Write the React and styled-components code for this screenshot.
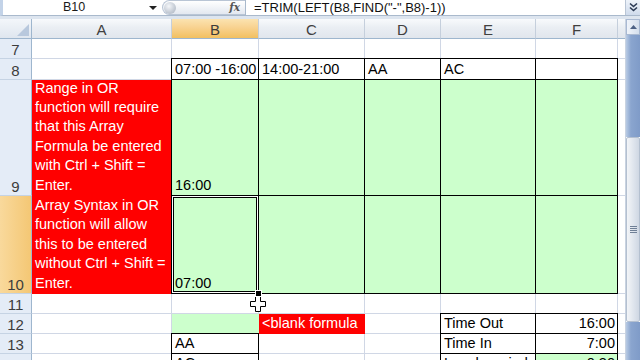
import React from 'react';
import styled, { createGlobalStyle, css } from 'styled-components';

const GlobalStyle = createGlobalStyle`
  html, body { margin: 0; padding: 0; background: #fff; overflow: hidden; }
  #root { width: 640px; height: 360px; }
`;

const FILLS = { red: '#ff0000', green: '#ccffcc' };
const GRID = '#d0d7e5';

const Window = styled.div`
  position: relative;
  width: 640px;
  height: 360px;
  overflow: hidden;
  display: flex;
  flex-direction: column;
  font-family: "Liberation Sans", Arial, sans-serif;
  background: #fff;
`;

const FormulaBar = styled.div`
  display: flex;
  align-items: stretch;
  height: 16px;
  box-sizing: border-box;
  border-bottom: 1px solid #a9b9cc;
  border-left: 3px solid #c3d3e8;
  background: #fff;
`;

const NameBox = styled.div`
  width: 142px;
  display: flex;
  align-items: center;
  justify-content: center;
  font-size: 12.5px;
  line-height: 15px;
  color: #1a1a1a;
`;

const DropArrow = styled.div`
  align-self: center;
  width: 0;
  height: 0;
  margin: 0 5px 0 4px;
  border-left: 4px solid transparent;
  border-right: 4px solid transparent;
  border-top: 4px solid #222;
`;

const FxPill = styled.div`
  width: 83px;
  box-sizing: border-box;
  display: flex;
  align-items: center;
  border: 1px solid #b9c5d5;
  border-right: none;
  border-radius: 8px 0 0 8px;
  background: linear-gradient(#ffffff, #e3e8f0);
`;

const Knob = styled.div`
  width: 12px;
  height: 12px;
  margin-left: 1px;
  border-radius: 50%;
  background: radial-gradient(circle at 40% 35%, #f4f6f9, #c3cad4 60%, #a9b2bf);
`;

const FxLabel = styled.span`
  margin-left: auto;
  padding-right: 5px;
  font-family: "DejaVu Serif", "Liberation Serif", serif;
  font-style: italic;
  font-weight: bold;
  font-size: 10.5px;
  line-height: 13px;
  color: #555;
`;

const FormulaText = styled.div`
  flex: 1;
  border-left: 1px solid #a9b9cc;
  padding-left: 8px;
  font-size: 13px;
  line-height: 15px;
  color: #111;
  white-space: nowrap;
`;

const ExpandButton = styled.div`
  width: 14px;
  display: flex;
  align-items: center;
  justify-content: center;
  border-left: 1px solid #b9c5d5;
  background: linear-gradient(#eef3fa, #cfdbec);
`;

const Strip = styled.div`
  height: 3px;
  background: #dde5ef;
`;

const Body = styled.div`
  flex: 1;
  display: flex;
  min-height: 0;
`;

const Sheet = styled.div`
  width: 626px;
  display: grid;
  grid-template-columns: 32px 140px 87px 106px 76px 95px 82px 8px;
  grid-template-rows: 20px 20px 21px 116px 98px 20px 20px 20px 20px;
  overflow: hidden;
`;

const Corner = styled.div`
  position: relative;
  box-sizing: border-box;
  background: linear-gradient(#f3f6fa, #dfe6ef);
  border-right: 1px solid #9eb6ce;
  border-bottom: 1px solid #9eb6ce;
  &::after {
    content: '';
    position: absolute;
    right: 2px;
    bottom: 2px;
    width: 0;
    height: 0;
    border-left: 12px solid transparent;
    border-bottom: 12px solid #b8c8dd;
  }
`;

const ColHeader = styled.div`
  box-sizing: border-box;
  display: flex;
  align-items: center;
  justify-content: center;
  padding-top: 1px;
  font-size: 15px;
  line-height: 19px;
  color: ${p => (p.$active ? '#3b3b3b' : '#404040')};
  border-right: 1px solid #c5cfdc;
  border-bottom: 1px solid #9eb6ce;
  background: ${p =>
    p.$active
      ? 'linear-gradient(#fbe3b0, #f8d290 45%, #f2c060)'
      : 'linear-gradient(#f8fafc, #eaeef3 45%, #e1e6ed)'};
  overflow: hidden;
`;

const RowHeader = styled.div`
  box-sizing: border-box;
  display: flex;
  align-items: flex-end;
  justify-content: center;
  font-size: 15px;
  line-height: 16px;
  color: #3c3c3c;
  border-right: 1px solid #9eb6ce;
  border-bottom: 1px solid #c5d3e4;
  background: ${p => (p.$active ? 'linear-gradient(to right, #f9d99c, #f4c774)' : '#e4ecf7')};
`;

const Cell = styled.div`
  position: relative;
  box-sizing: border-box;
  min-width: 0;
  display: flex;
  align-items: flex-end;
  justify-content: ${p => (p.$align === 'right' ? 'flex-end' : 'flex-start')};
  padding: 0 ${p => (p.$align === 'right' ? '2px' : '3px')} 0 3px;
  font-size: 14.5px;
  line-height: ${p => (p.$wrap ? '19.4px' : '19px')};
  color: ${p => (p.$fill === 'red' ? '#ffffff' : '#000000')};
  background: ${p => FILLS[p.$fill] || '#ffffff'};
  border-right: 1px solid ${p => FILLS[p.$fill] || GRID};
  border-bottom: 1px solid ${p => FILLS[p.$fill] || GRID};
  white-space: ${p => (p.$wrap ? 'pre-line' : 'nowrap')};
  overflow: hidden;
  ${p =>
    p.$box &&
    css`
      border-right-color: #000;
      border-bottom-color: #000;
      box-shadow: -1px 0 0 #000, 0 -1px 0 #000, -1px -1px 0 #000;
    `}
  ${p =>
    p.$selected &&
    css`
      overflow: visible;
      z-index: 1;
      box-shadow: -1px 0 0 #000, 0 -1px 0 #000, -1px -1px 0 #000,
        inset 0 0 0 1px #fff, inset 0 0 0 2px #000;
    `}
`;

const FillHandle = styled.div`
  position: absolute;
  right: -4px;
  bottom: -4px;
  width: 5px;
  height: 5px;
  background: #000;
  border: 1px solid #fff;
`;

const ScrollBar = styled.div`
  width: 14px;
  display: flex;
  flex-direction: column;
  border-left: 1px solid #c9d3e1;
`;

const ScrollUp = styled.div`
  height: 16px;
  box-sizing: border-box;
  display: flex;
  align-items: center;
  justify-content: center;
  border: 1px solid #a9b9d2;
  background: linear-gradient(to right, #f0f4fa, #d4deec);
`;

const Track = styled.div`
  height: ${p => (p.$h ? `${p.$h}px` : 'auto')};
  flex: ${p => (p.$h ? 'none' : '1')};
  background: linear-gradient(to right, #b9cbe4, #8aa5cf 35%, #7f9bc8);
`;

const Thumb = styled.div`
  height: 185px;
  box-sizing: border-box;
  display: flex;
  align-items: center;
  justify-content: center;
  border: 1px solid #b4c0d0;
  border-radius: 2px;
  background: linear-gradient(to right, #f3f5f8, #dde3ec 60%, #cfd7e3);
`;

const Grip = styled.div`
  width: 7px;
  height: 7px;
  background: repeating-linear-gradient(#6f7f96 0 1px, transparent 1px 2px);
`;

const Cursor = styled.svg`
  position: absolute;
  left: 250px;
  top: 296px;
`;

const COLS = ['A', 'B', 'C', 'D', 'E', 'F', 'G'];

const TEXT9 = 'Range in OR\nfunction will require\nthat this Array\nFormula be entered\nwith Ctrl + Shift =\nEnter.';
const TEXT10 = 'Array Syntax in OR\nfunction will allow\nthis to be entered\nwithout Ctrl + Shift =\nEnter.';

const g = { fill: 'green', box: true };

const ROWS = [
  { n: 7, cells: {} },
  {
    n: 8,
    cells: {
      B: { text: '07:00 -16:00', box: true },
      C: { text: '14:00-21:00', box: true },
      D: { text: 'AA', box: true },
      E: { text: 'AC', box: true },
      F: { box: true },
    },
  },
  {
    n: 9,
    cells: {
      A: { text: TEXT9, fill: 'red', wrap: true },
      B: { ...g, text: '16:00' },
      C: g, D: g, E: g, F: g,
    },
  },
  {
    n: 10,
    active: true,
    cells: {
      A: { text: TEXT10, fill: 'red', wrap: true },
      B: { ...g, text: '07:00', selected: true },
      C: g, D: g, E: g, F: g,
    },
  },
  { n: 11, cells: {} },
  {
    n: 12,
    cells: {
      B: { fill: 'green' },
      C: { text: '<blank formula', fill: 'red' },
      E: { text: 'Time Out', box: true },
      F: { text: '16:00', box: true, align: 'right' },
    },
  },
  {
    n: 13,
    cells: {
      B: { text: 'AA', box: true },
      E: { text: 'Time In', box: true },
      F: { text: '7:00', box: true, align: 'right' },
    },
  },
  {
    n: 14,
    cells: {
      B: { text: 'AC', box: true },
      E: { text: 'Lunch period', box: true },
      F: { text: '0:30', fill: 'green', box: true, align: 'right' },
    },
  },
];

export default function App() {
  return (
    <>
      <GlobalStyle />
      <Window>
        <FormulaBar>
          <NameBox>B10</NameBox>
          <DropArrow />
          <FxPill>
            <Knob />
            <FxLabel>fx</FxLabel>
          </FxPill>
          <FormulaText>=TRIM(LEFT(B8,FIND("-",B8)-1))</FormulaText>
          <ExpandButton>
            <svg width="9" height="11" viewBox="0 0 9 11">
              <path d="M1 1.5 L4.5 4.5 L8 1.5 M1 5.5 L4.5 8.5 L8 5.5" fill="none" stroke="#2a3a55" strokeWidth="1.6" />
            </svg>
          </ExpandButton>
        </FormulaBar>
        <Strip />
        <Body>
          <Sheet>
            <Corner />
            {COLS.map(c => (
              <ColHeader key={c} $active={c === 'B'}>
                {c === 'G' ? '' : c}
              </ColHeader>
            ))}
            {ROWS.map(row => (
              <React.Fragment key={row.n}>
                <RowHeader $active={row.active}>{row.n}</RowHeader>
                {COLS.map(c => {
                  const d = row.cells[c] || {};
                  return (
                    <Cell
                      key={c}
                      $fill={d.fill}
                      $box={d.box}
                      $wrap={d.wrap}
                      $align={d.align}
                      $selected={d.selected}
                    >
                      {d.text}
                      {d.selected && <FillHandle />}
                    </Cell>
                  );
                })}
              </React.Fragment>
            ))}
          </Sheet>
          <ScrollBar>
            <ScrollUp>
              <svg width="7" height="4" viewBox="0 0 7 4">
                <path d="M0 4 L3.5 0 L7 4 Z" fill="#4d6185" />
              </svg>
            </ScrollUp>
            <Track $h={102} />
            <Thumb>
              <Grip />
            </Thumb>
            <Track />
          </ScrollBar>
        </Body>
        <Cursor width="17" height="17" viewBox="0 0 17 17">
          <path
            d="M5.5 0.5 H10.5 V5.5 H15.5 V10.5 H10.5 V15.5 H5.5 V10.5 H0.5 V5.5 H5.5 Z"
            fill="#fff"
            stroke="#000"
            strokeWidth="1"
          />
        </Cursor>
      </Window>
    </>
  );
}
